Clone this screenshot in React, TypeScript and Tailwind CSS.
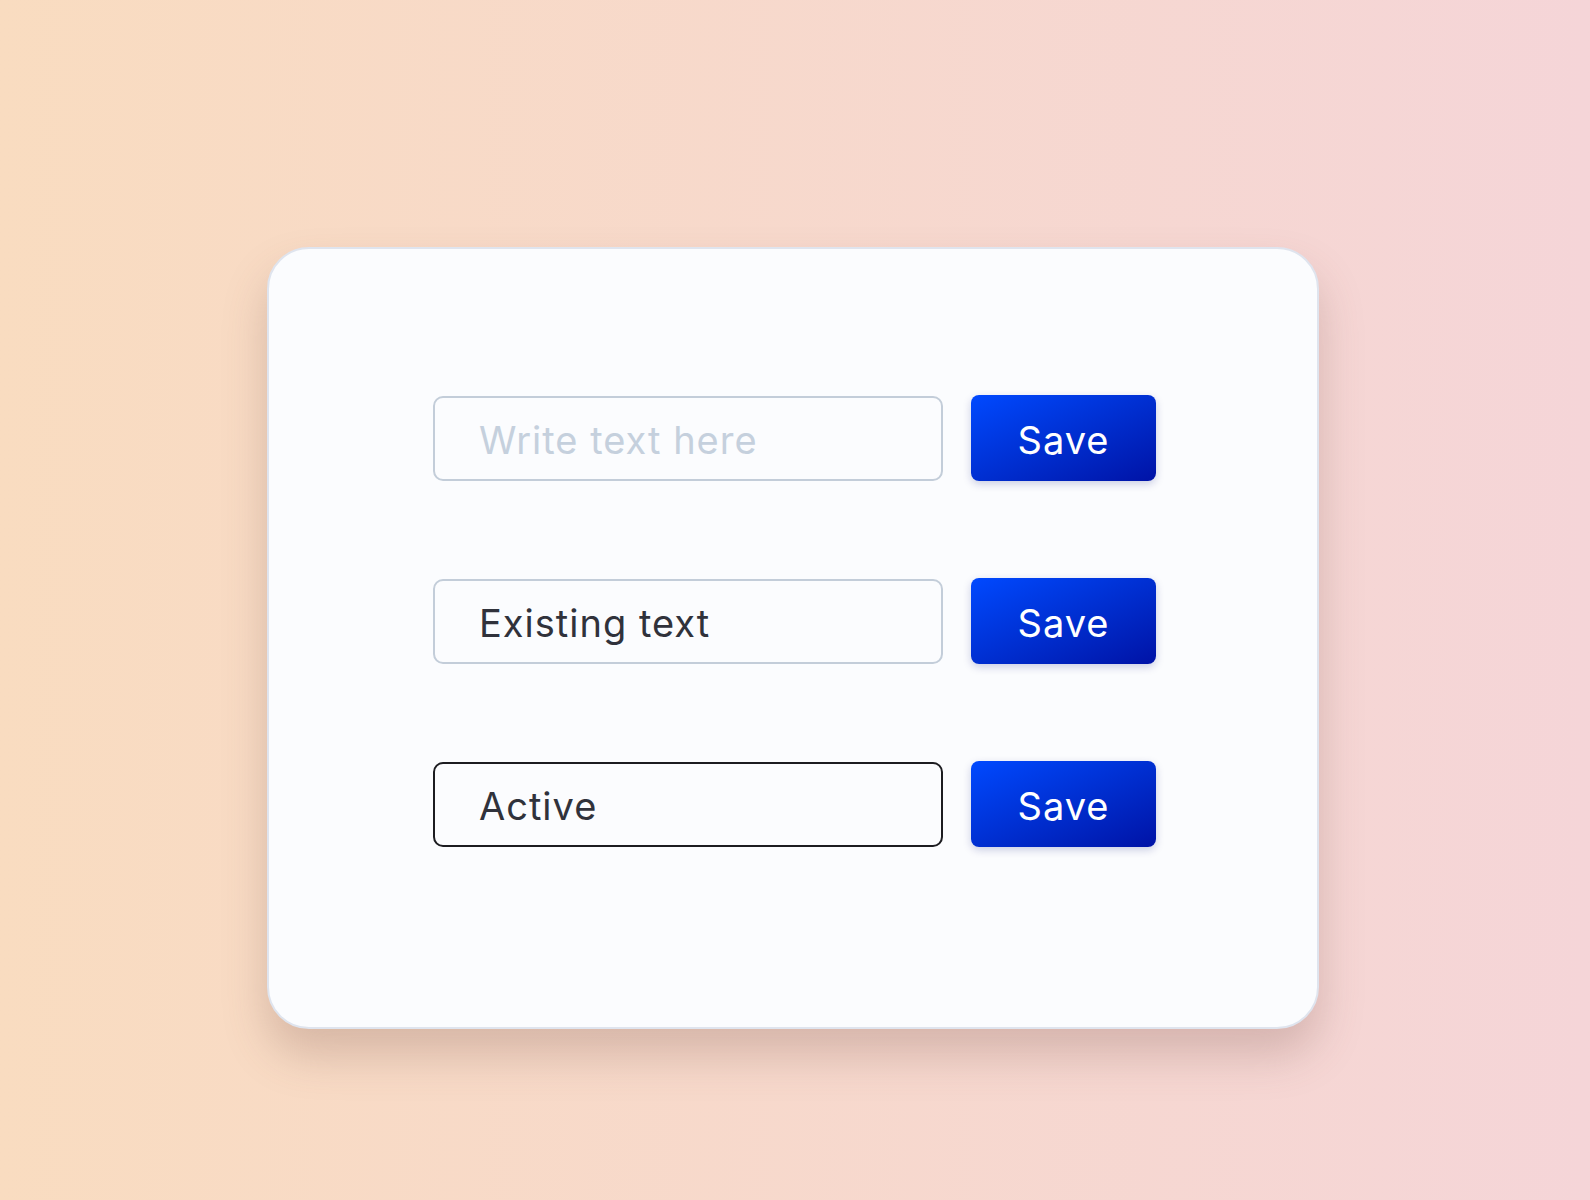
const rows = [
  { value: '', placeholder: 'Write text here', active: false },
  { value: 'Existing text', placeholder: '', active: false },
  { value: 'Active', placeholder: '', active: true },
];

function SaveRow({ value, placeholder, active }: { value: string; placeholder: string; active: boolean }) {
  return (
    <div className="flex items-center gap-[28px]">
      <div
        className={`flex h-[85px] w-[510px] items-center rounded-[10px] bg-[#fbfcfe] px-[44px] pt-[5px] ${
          active ? 'border-[2.5px] border-[#1c1c20]' : 'border-2 border-[#c3cdd9]'
        }`}
      >
        <input
          readOnly
          value={value}
          placeholder={placeholder}
          className="w-full bg-transparent text-[38px] tracking-[1px] text-[#30323b] outline-none placeholder:text-[#c5d0dd]"
        />
      </div>
      <button className="h-[86px] w-[185px] rounded-[8px] bg-gradient-to-br from-[#0049ff] to-[#0012a6] pt-[5px] text-[38px] tracking-[1px] text-white shadow-[0_3px_8px_rgba(0,20,120,0.2)]">
        Save
      </button>
    </div>
  );
}

export default function App() {
  return (
    <div
      className="flex h-[1200px] w-full bg-gradient-to-r from-[#f9dcc0] to-[#f5d5d8] pt-[247px] pl-[267px]"
      style={{ fontFamily: 'Inter, "Noto Sans", sans-serif' }}
    >
      <div className="h-[782px] w-[1052px] rounded-[42px] border-2 border-[#dfe4ee] bg-[#fbfcfe] pt-[146px] pl-[164px] shadow-[0_26px_44px_rgba(120,80,70,0.25)]">
        <div className="flex flex-col gap-[97px]">
          {rows.map((r, i) => (
            <SaveRow key={i} {...r} />
          ))}
        </div>
      </div>
    </div>
  );
}
